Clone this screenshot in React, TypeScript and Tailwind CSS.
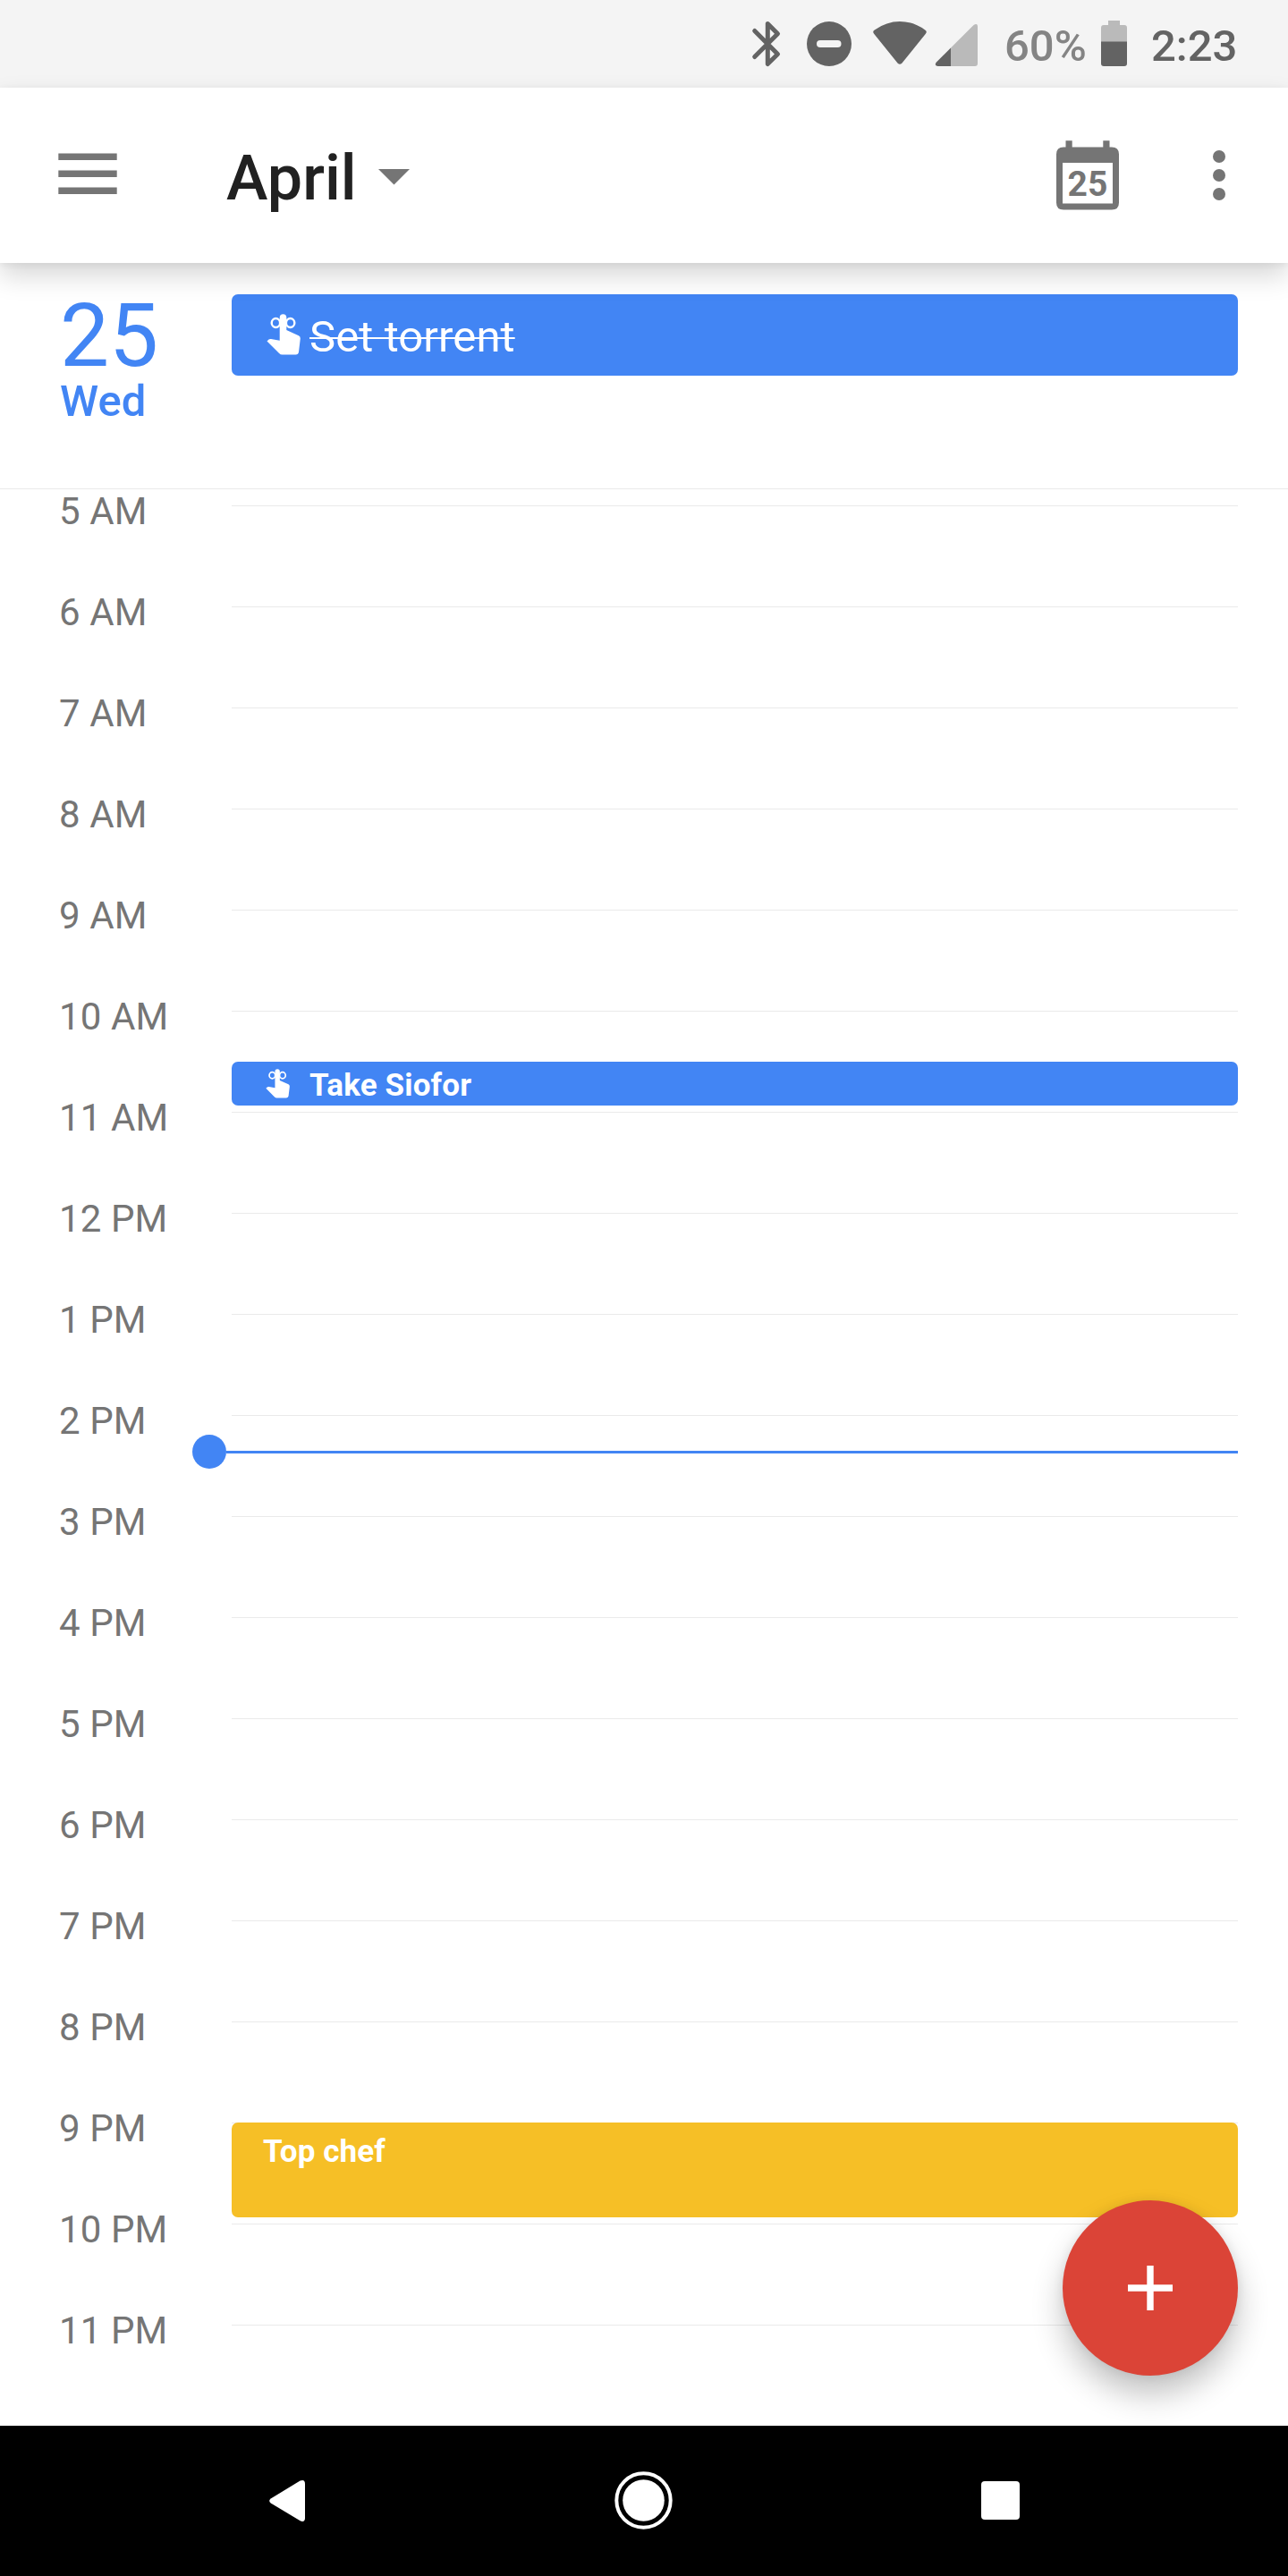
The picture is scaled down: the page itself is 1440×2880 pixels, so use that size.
const hours = [
  '5 AM', '6 AM', '7 AM', '8 AM', '9 AM', '10 AM', '11 AM', '12 PM', '1 PM', '2 PM',
  '3 PM', '4 PM', '5 PM', '6 PM', '7 PM', '8 PM', '9 PM', '10 PM', '11 PM',
];

function ReminderIcon({ className }: { className: string }) {
  return (
    <svg viewBox="0 0 38 46" className={className}>
      <g fill="none" stroke="#fff" strokeWidth="2.4">
        <ellipse cx="10.4" cy="10" rx="4.7" ry="5" />
        <ellipse cx="26.6" cy="10" rx="4.7" ry="5" />
      </g>
      <path
        fill="#fff"
        d="M14.7 4a3.8 3.8 0 0 1 7.6 0v14l13.6 6.200q2 1 1.900 3.300L36 42.500q-.4 3-3.400 3H17.500q-2 0-3.400-1.500L.5 30.500 2.500 28.500q1-.8 2.500-.5l9.700 1.800z"
      />
    </svg>
  );
}

function StatusBar() {
  return (
    <div className="flex h-[98px] items-start bg-[#f4f4f4] text-[49px] leading-[58px] font-medium text-[#636363]">
      <svg viewBox="836 0 280 98" className="ml-[836px] h-[98px] w-[280px] shrink-0">
        <path
          d="M843.7 34.500 869.500 60.500 858.300 71.500V26.500L869.500 37.700 843.700 63.500"
          fill="none"
          stroke="#636363"
          strokeWidth="5"
          strokeLinecap="round"
          strokeLinejoin="round"
        />
        <circle cx="927" cy="49" r="25" fill="#636363" />
        <rect x="913" y="45" width="27.5" height="8" rx="4" fill="#f4f4f4" />
        <path
          fill="#636363"
          d="M977.3 38q-2.400-2.600.5-4.500Q991 24 1006 24t28.200 9.500q2.900 1.900.5 4.500L1008.300 70.700q-2.300 2.300-4.600 0z"
        />
        <path fill="#bababa" d="M1063 53.500 1088.600 28q4.400-2.500 4.400 2V71q0 3-3 3h-27z" />
        <path fill="#636363" d="M1063 53.500V74h-14.500q-4.300-1-1.800-4.300z" />
      </svg>
      <div className="mt-[23px] ml-[7px] w-[108px] shrink-0 text-[#848484]">60%</div>
      <svg viewBox="0 0 29 51" className="mt-[23px] h-[51px] w-[29px] shrink-0">
        <path fill="#bababa" d="M8 0h13v5h5q3 0 3 3v16H0V8q0-3 3-3h5z" />
        <path fill="#636363" d="M0 23.500h29V48q0 3-3 3H3q-3 0-3-3z" />
      </svg>
      <div className="mt-[23px] ml-[27px]">2:23</div>
    </div>
  );
}

function AppBar() {
  return (
    <header className="relative z-10 flex h-[196px] items-start bg-white shadow-[0_14px_28px_rgba(0,0,0,0.16),0_2px_8px_rgba(0,0,0,0.06)]">
      <svg viewBox="0 0 66 46" className="mt-[73px] ml-[65px] h-[46px] w-[66px] shrink-0" fill="#757575">
        <rect x=".3" y=".5" width="65.4" height="7.5" />
        <rect x=".3" y="19.5" width="65.4" height="7.5" />
        <rect x=".3" y="38.5" width="65.4" height="7.5" />
      </svg>
      <h1 className="mt-[60px] ml-[122px] w-[170px] text-[70px] leading-[82px] font-medium text-[#212121]">April</h1>
      <svg viewBox="0 0 35 18" className="mt-[91px] h-[18px] w-[35px] shrink-0">
        <path d="M0 0h35L17.5 17.500z" fill="#757575" />
      </svg>
      <svg viewBox="0 0 70 78" className="mt-[59px] ml-[723px] h-[78px] w-[70px] shrink-0">
        <path
          fill="#757575"
          fillRule="evenodd"
          d="M10.500.3h7.200v7.200h34.600V.3h7.200v7.200H62q8 0 8 8v54q0 8-8 8H8q-8 0-8-8v-54q0-8 8-8h2.500zM7 25v45.500h56V25z"
        />
        <text x="35" y="62" textAnchor="middle" fontSize="39" fontWeight="700" fill="#757575">
          25
        </text>
      </svg>
      <svg viewBox="0 0 14 56" className="mt-[70px] ml-[105px] h-[56px] w-[14px] shrink-0" fill="#757575">
        <circle cx="7" cy="7" r="7" />
        <circle cx="7" cy="28" r="7" />
        <circle cx="7" cy="49" r="7" />
      </svg>
    </header>
  );
}

function DayHeader() {
  return (
    <section className="flex h-[253px] border-b border-[#eaeaea] pr-[56px] text-[#4285f4]">
      <div className="w-[259px] pl-[67px]">
        <div className="mt-[37px] text-[98px] leading-[90px]">25</div>
        <div className="mt-[3px] text-[49px] leading-[50px] font-medium">Wed</div>
      </div>
      <div className="mt-[35px] flex h-[91px] flex-1 items-start rounded-[7px] bg-[#4285f4] text-white">
        <ReminderIcon className="mt-[22px] ml-[39px] h-[46px] w-[38px]" />
        <span className="mt-[19px] ml-[10px] text-[49px] leading-[58px] tracking-[0.1px] line-through decoration-2">
          Set torrent
        </span>
      </div>
    </section>
  );
}

function Timeline() {
  return (
    <main className="relative h-[2165px]">
      {hours.map((hour) => (
        <div key={hour} className="flex h-[113px] pr-[56px]">
          <div className="w-[259px] pl-[66px] text-[42px] leading-[49px] tracking-[0.1px] text-[#757575]">{hour}</div>
          <div className="mt-[18px] h-px flex-1 bg-[#eaeaea]" />
        </div>
      ))}

      {/* events */}
      <div className="absolute top-[640px] right-[56px] left-[259px] flex h-[49px] rounded-[7px] bg-[#4285f4] text-white">
        <ReminderIcon className="mt-[8px] ml-[38px] h-[33px] w-[27px]" />
        <span className="mt-[6px] ml-[22px] text-[35px] leading-[41px] font-bold tracking-[0.15px]">Take Siofor</span>
      </div>
      <div className="absolute top-[1826px] right-[56px] left-[259px] h-[106px] rounded-[7px] bg-[#f6bf26] pt-[12px] pl-[35px] text-[35px] leading-[41px] font-bold tracking-[0.1px] text-white">
        Top chef
      </div>

      {/* current time */}
      <div className="absolute top-[1057px] right-[56px] left-[215px] flex h-[38px] items-center">
        <div className="size-[38px] rounded-full bg-[#4285f4]" />
        <div className="h-[3px] flex-1 bg-[#4285f4]" />
      </div>

      <button className="absolute top-[1913px] right-[56px] flex size-[196px] items-center justify-center rounded-full bg-[#db4437] shadow-[0_21px_35px_rgba(0,0,0,0.24),0_0_12px_rgba(0,0,0,0.08)]">
        <svg viewBox="0 0 50 50" className="size-[50px]" fill="#fff">
          <path d="M21.300 0h7.400v21.300H50v7.400H28.700V50h-7.400V28.700H0v-7.400h21.300z" />
        </svg>
      </button>
    </main>
  );
}

function NavBar() {
  return (
    <nav className="relative z-10 flex h-[168px] items-start bg-black">
      <svg viewBox="0 0 40 46" className="mt-[61px] ml-[301px] h-[46px] w-[40px]" fill="#fff">
        <path d="M34.500.6Q40-1.500 40 4v38q0 5.500-5 3.500L1.700 25.500q-3-2.500 0-5z" />
      </svg>
      <svg viewBox="0 0 65 65" className="mt-[51px] ml-[346px] size-[65px]">
        <circle cx="32.5" cy="32.5" r="30.2" fill="none" stroke="#fff" strokeWidth="4" />
        <circle cx="32.5" cy="32.5" r="23.3" fill="#fff" />
      </svg>
      <div className="mt-[62px] ml-[345px] size-[43px] rounded-[4px] bg-white" />
    </nav>
  );
}

export default function App() {
  return (
    <div className="h-[2880px] w-[1440px] overflow-hidden bg-white font-[Roboto,sans-serif]">
      <StatusBar />
      <AppBar />
      <DayHeader />
      <Timeline />
      <NavBar />
    </div>
  );
}
